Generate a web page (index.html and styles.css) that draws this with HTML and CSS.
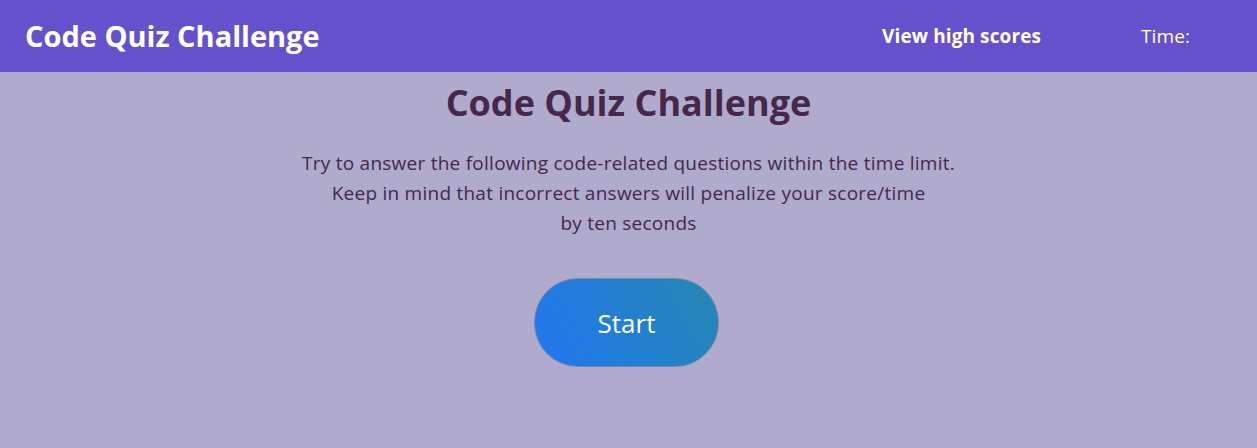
FILE: index.html
```html
<!DOCTYPE html>
<html>
<head>
<meta charset="utf-8">
<link rel="stylesheet" href="styles.css">
</head>
<body>
<header class="topbar">
  <div class="brand">Code Quiz Challenge</div>
  <nav class="nav">
    <a class="scores" href="#">View high scores</a>
    <span class="timer">Time:</span>
  </nav>
</header>
<main class="intro">
  <h1 class="title">Code Quiz Challenge</h1>
  <p class="desc">Try to answer the following code-related questions within the time limit.<br>Keep in mind that incorrect answers will penalize your score/time<br>by ten seconds</p>
  <button class="start">Start</button>
</main>
</body>
</html>
```
FILE: styles.css
```css
html, body {
  margin: 0;
  padding: 0;
}
body {
  background: #b0aacd;
  font-family: "Open Sans", "Noto Sans", sans-serif;
  height: 448px;
  overflow: hidden;
}
.topbar {
  height: 72px;
  background: #6651cd;
  display: flex;
  align-items: center;
  justify-content: space-between;
  padding: 0 0 0 25px;
}
.brand {
  color: #fff;
  font-weight: 700;
  font-size: 29px;
  margin-top: -2px;
}
.nav {
  display: flex;
  align-items: center;
}
.scores {
  color: #fff;
  font-weight: 700;
  font-size: 19px;
  text-decoration: none;
  letter-spacing: 0.1px;
}
.timer {
  color: #fff;
  font-size: 19px;
  margin-left: 100px;
  width: 116px;
  letter-spacing: 0.1px;
}
.intro {
  display: flex;
  flex-direction: column;
  align-items: center;
  text-align: center;
}
.title {
  margin: 8px 0 0;
  font-size: 36px;
  font-weight: 700;
  color: #45284a;
  line-height: 46px;
}
.desc {
  margin: 22px 0 0;
  font-size: 19px;
  line-height: 30px;
  color: #45284a;
  letter-spacing: 0.25px;
}
.start {
  margin-top: 40px;
  margin-right: 4px;
  width: 185px;
  height: 89px;
  border-radius: 44px;
  border: 1px solid #7a86a8;
  background: linear-gradient(60deg, #2276f2 0%, #2488b0 100%);
  color: #fff;
  font-family: inherit;
  font-size: 26px;
  cursor: pointer;
}
```
